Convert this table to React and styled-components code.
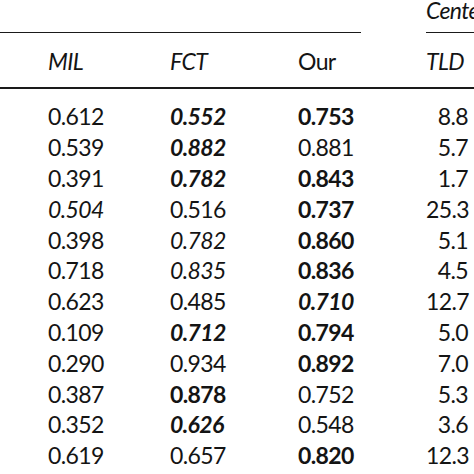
import React from 'react';
import styled, { createGlobalStyle } from 'styled-components';

const GlobalStyle = createGlobalStyle`
  html, body {
    margin: 0;
    padding: 0;
    background: #ffffff;
    overflow: hidden;
  }
`;

const cols = '48px 122px 128px 63px 65px 42px 200px';

const Table = styled.div`
  width: 668px;
  font-family: Lato, 'Open Sans', sans-serif;
  font-size: 23px;
  letter-spacing: -0.6px;
  color: #141414;
`;

const GroupRow = styled.div`
  display: grid;
  grid-template-columns: ${cols};
  height: 33px;
`;

const GroupCell = styled.div`
  grid-column: ${(p) => p.span};
  border-bottom: 1.5px solid #1a1a1a;
  font-style: italic;
  line-height: 21px;
  padding-top: 0;
  white-space: nowrap;
`;

const HeadRow = styled.div`
  display: grid;
  grid-template-columns: ${cols};
  height: 54px;
  align-items: center;
  border-bottom: 2px solid #1a1a1a;
`;

const HeadCell = styled.div`
  grid-column: ${(p) => p.col};
  font-style: ${(p) => (p.italic ? 'italic' : 'normal')};
  padding-top: 2px;
`;

const Body = styled.div`
  padding-top: 12px;
`;

const Row = styled.div`
  display: grid;
  grid-template-columns: ${cols};
  height: 30.8px;
  align-items: center;
`;

const Cell = styled.div`
  grid-column: ${(p) => p.col};
  font-weight: ${(p) => (p.bold ? 700 : 400)};
  font-style: ${(p) => (p.italic ? 'italic' : 'normal')};
  text-align: ${(p) => (p.right ? 'right' : 'left')};
  white-space: nowrap;
`;

// b = bold, i = italic, bi = both
const rows = [
  [['0.612'], ['0.552', 'bi'], ['0.753', 'b'], '8.8'],
  [['0.539'], ['0.882', 'bi'], ['0.881'], '5.7'],
  [['0.391'], ['0.782', 'bi'], ['0.843', 'b'], '1.7'],
  [['0.504', 'i'], ['0.516'], ['0.737', 'b'], '25.3'],
  [['0.398'], ['0.782', 'i'], ['0.860', 'b'], '5.1'],
  [['0.718'], ['0.835', 'i'], ['0.836', 'b'], '4.5'],
  [['0.623'], ['0.485'], ['0.710', 'bi'], '12.7'],
  [['0.109'], ['0.712', 'bi'], ['0.794', 'b'], '5.0'],
  [['0.290'], ['0.934'], ['0.892', 'b'], '7.0'],
  [['0.387'], ['0.878', 'b'], ['0.752'], '5.3'],
  [['0.352'], ['0.626', 'bi'], ['0.548'], '3.6'],
  [['0.619'], ['0.657'], ['0.820', 'b'], '12.3'],
];

function Value({ col, v }) {
  const [text, style = ''] = v;
  return (
    <Cell col={col} bold={style.includes('b')} italic={style.includes('i')}>
      {text}
    </Cell>
  );
}

export default function App() {
  return (
    <>
      <GlobalStyle />
      <Table>
        <GroupRow>
          <GroupCell span="1 / 5" />
          <GroupCell span="6 / 8">Center error</GroupCell>
        </GroupRow>
        <HeadRow>
          <HeadCell col={2} italic>MIL</HeadCell>
          <HeadCell col={3} italic>FCT</HeadCell>
          <HeadCell col={4}>Our</HeadCell>
          <HeadCell col={6} italic>TLD</HeadCell>
        </HeadRow>
        <Body>
          {rows.map((r, i) => (
            <Row key={i}>
              <Value col={2} v={r[0]} />
              <Value col={3} v={r[1]} />
              <Value col={4} v={r[2]} />
              <Cell col={6} right>{r[3]}</Cell>
            </Row>
          ))}
        </Body>
      </Table>
    </>
  );
}
